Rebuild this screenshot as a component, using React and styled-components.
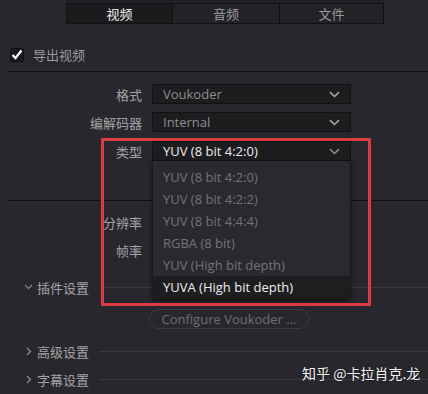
import React from "react";
import styled, { createGlobalStyle } from "styled-components";

const Global = createGlobalStyle`
  html, body {
    margin: 0;
    padding: 0;
    background: #28272d;
  }
  body {
    font-family: "Open Sans", "Noto Sans CJK SC", sans-serif;
    font-size: 13px;
    color: #a4a4a6;
  }
`;

const Page = styled.div`
  position: relative;
  width: 428px;
  height: 394px;
  overflow: hidden;
  background: #28272d;
  display: flex;
  flex-direction: column;
`;

const TopEdge = styled.div`
  height: 3px;
  margin-left: 66px;
  width: 318px;
  display: grid;
  grid-template-columns: 104px 104px 1fr;
  background: #222226;

  span + span {
    border-left: 1px solid #151517;
  }
`;

const TabBar = styled.div`
  margin-left: 66px;
  width: 318px;
  height: 21px;
  box-sizing: border-box;
  display: grid;
  grid-template-columns: 105px 107px 1fr;
  border: 1px solid #111113;
  background: #232327;
`;

const Tab = styled.div`
  display: flex;
  align-items: center;
  justify-content: center;
  font-family: "Noto Sans CJK SC", sans-serif;
  font-size: 13px;
  color: ${(p) => (p.$active ? "#f2f2f2" : "#9a9a9c")};
  background: ${(p) => (p.$active ? "#1b1b1d" : "#232327")};
  & + & {
    border-left: 1px solid #111113;
  }
`;

const CheckRow = styled.label`
  margin: 23px 0 0 10px;
  height: 15px;
  display: flex;
  align-items: center;
  gap: 9px;
  font-family: "Noto Sans CJK SC", sans-serif;
  font-size: 13px;
  color: #9c9c9e;
`;

const Box = styled.span`
  width: 14px;
  height: 14px;
  box-sizing: border-box;
  border: 1px solid #111;
  border-radius: 2px;
  background: #1a1a1c;
  display: flex;
  align-items: center;
  justify-content: center;
`;

const Divider = styled.div`
  height: 1px;
  margin: ${(p) => p.$top}px 0 0 8px;
  background: #111113;
`;

const FormRow = styled.div`
  margin-top: ${(p) => p.$top}px;
  height: 20px;
  display: grid;
  grid-template-columns: 142px 199px;
  column-gap: 10px;
  align-items: center;
`;

const Label = styled.span`
  text-align: right;
  font-family: "Noto Sans CJK SC", sans-serif;
  font-size: 13px;
  color: #a4a4a6;
`;

const SelectWrap = styled.div`
  position: relative;
  height: 20px;
`;

const Select = styled.div`
  height: 20px;
  box-sizing: border-box;
  border: 1px solid #121214;
  background: #1d1d20;
  display: flex;
  align-items: center;
  justify-content: space-between;
  padding: 0 10px 0 10px;
  font-size: 13px;
  color: ${(p) => (p.$open ? "#ececec" : "#8e8e90")};
`;

const Menu = styled.div`
  position: absolute;
  left: 0;
  top: 20px;
  width: 199px;
  height: 138px;
  box-sizing: border-box;
  padding-top: 5px;
  background: #2a292f;
  border: 1px solid #1a1a1d;
  border-top: none;
  box-shadow: 0 2px 4px rgba(0, 0, 0, 0.5);
  z-index: 2;
`;

const Item = styled.div`
  height: 22px;
  display: flex;
  align-items: center;
  padding-left: 10px;
  font-size: 13px;
  color: ${(p) => (p.$hover ? "#ededed" : "#737376")};
  background: ${(p) => (p.$hover ? "#1e1e21" : "transparent")};
`;

const Section = styled.div`
  margin-top: ${(p) => p.$top}px;
  height: 20px;
  display: flex;
  align-items: center;
  padding-left: 24px;
  font-family: "Noto Sans CJK SC", sans-serif;
  font-size: 13px;
  color: #a4a4a6;

  &::after {
    content: "";
    flex: 1;
    height: 1px;
    margin-left: 10px;
    background: #3a393f;
  }
`;

const Caret = styled.span`
  width: 9px;
  display: flex;
  justify-content: center;
  margin-right: 4px;
`;

const Pill = styled.div`
  margin: 12px 0 0 149px;
  width: 160px;
  height: 20px;
  box-sizing: border-box;
  border: 1px solid #3b3a40;
  border-radius: 10px;
  display: flex;
  align-items: center;
  justify-content: center;
  font-size: 13px;
  color: #6f6f72;
`;

const Annotation = styled.div`
  position: absolute;
  left: 101px;
  top: 138px;
  width: 270px;
  height: 168px;
  box-sizing: border-box;
  border: 3px solid #dc3b43;
  pointer-events: none;
  z-index: 3;
`;

const Watermark = styled.div`
  position: absolute;
  left: 302px;
  top: 363px;
  font-family: "Noto Sans CJK SC", sans-serif;
  font-size: 14px;
  line-height: 20px;
  color: #f4f4f4;
  text-shadow: 0 0 2px rgba(0, 0, 0, 0.6);
  white-space: nowrap;
`;

const Chevron = ({ color = "#a8a8aa" }) => (
  <svg width="11" height="7" viewBox="0 0 11 7">
    <path d="M1 1.2 L5.5 5.5 L10 1.2" fill="none" stroke={color} strokeWidth="1.6" />
  </svg>
);

const Down = () => (
  <svg width="9" height="6" viewBox="0 0 9 6">
    <path d="M1 1 L4.5 4.5 L8 1" fill="none" stroke="#8a8a8c" strokeWidth="1.2" />
  </svg>
);

const Right = () => (
  <svg width="6" height="9" viewBox="0 0 6 9">
    <path d="M1 1 L4.5 4.5 L1 8" fill="none" stroke="#8a8a8c" strokeWidth="1.3" />
  </svg>
);

const Check = () => (
  <svg width="12" height="11" viewBox="0 0 12 11">
    <path d="M1.5 6 L4.5 9 L10.5 1.5" fill="none" stroke="#ffffff" strokeWidth="2.2" />
  </svg>
);

const options = [
  "YUV (8 bit 4:2:0)",
  "YUV (8 bit 4:2:2)",
  "YUV (8 bit 4:4:4)",
  "RGBA (8 bit)",
  "YUV (High bit depth)",
  "YUVA (High bit depth)",
];

export default function App() {
  return (
    <>
      <Global />
      <Page>
        <TopEdge>
          <span />
          <span />
          <span />
        </TopEdge>
        <TabBar>
          <Tab $active>视频</Tab>
          <Tab>音频</Tab>
          <Tab>文件</Tab>
        </TabBar>

        <CheckRow>
          <Box>
            <Check />
          </Box>
          导出视频
        </CheckRow>
        <Divider $top={9} />

        <FormRow $top={12}>
          <Label>格式</Label>
          <SelectWrap>
            <Select>
              Voukoder
              <Chevron />
            </Select>
          </SelectWrap>
        </FormRow>
        <FormRow $top={8}>
          <Label>编解码器</Label>
          <SelectWrap>
            <Select>
              Internal
              <Chevron />
            </Select>
          </SelectWrap>
        </FormRow>
        <FormRow $top={9}>
          <Label>类型</Label>
          <SelectWrap>
            <Select $open>
              YUV (8 bit 4:2:0)
              <Chevron color="#8a8a8c" />
            </Select>
            <Menu>
              {options.map((o, i) => (
                <Item key={o} $hover={i === options.length - 1}>
                  {o}
                </Item>
              ))}
            </Menu>
          </SelectWrap>
        </FormRow>

        <Divider $top={39} />
        <FormRow $top={11}>
          <Label>分辨率</Label>
        </FormRow>
        <FormRow $top={8}>
          <Label>帧率</Label>
        </FormRow>

        <Section $top={17}>
          <Caret>
            <Down />
          </Caret>
          插件设置
        </Section>
        <Pill>Configure Voukoder ...</Pill>
        <Section $top={12}>
          <Caret>
            <Right />
          </Caret>
          高级设置
        </Section>
        <Section $top={8}>
          <Caret>
            <Right />
          </Caret>
          字幕设置
        </Section>

        <Annotation />
        <Watermark>知乎 @卡拉肖克.龙</Watermark>
      </Page>
    </>
  );
}
